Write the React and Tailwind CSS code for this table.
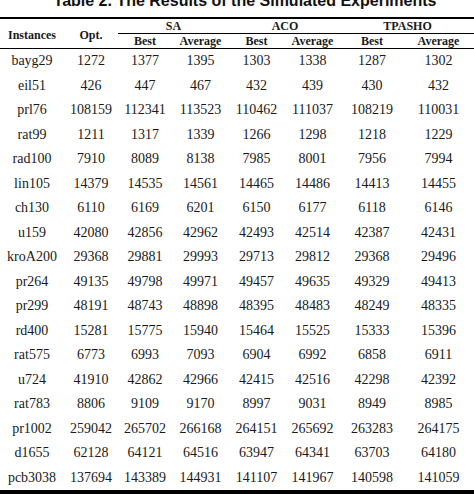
import React from "react";

const rows = [
  ["bayg29", "1272", "1377", "1395", "1303", "1338", "1287", "1302"],
  ["eil51", "426", "447", "467", "432", "439", "430", "432"],
  ["prl76", "108159", "112341", "113523", "110462", "111037", "108219", "110031"],
  ["rat99", "1211", "1317", "1339", "1266", "1298", "1218", "1229"],
  ["rad100", "7910", "8089", "8138", "7985", "8001", "7956", "7994"],
  ["lin105", "14379", "14535", "14561", "14465", "14486", "14413", "14455"],
  ["ch130", "6110", "6169", "6201", "6150", "6177", "6118", "6146"],
  ["u159", "42080", "42856", "42962", "42493", "42514", "42387", "42431"],
  ["kroA200", "29368", "29881", "29993", "29713", "29812", "29368", "29496"],
  ["pr264", "49135", "49798", "49971", "49457", "49635", "49329", "49413"],
  ["pr299", "48191", "48743", "48898", "48395", "48483", "48249", "48335"],
  ["rd400", "15281", "15775", "15940", "15464", "15525", "15333", "15396"],
  ["rat575", "6773", "6993", "7093", "6904", "6992", "6858", "6911"],
  ["u724", "41910", "42862", "42966", "42415", "42516", "42298", "42392"],
  ["rat783", "8806", "9109", "9170", "8997", "9031", "8949", "8985"],
  ["pr1002", "259042", "265702", "266168", "264151", "265692", "263283", "264175"],
  ["d1655", "62128", "64121", "64516", "63947", "64341", "63703", "64180"],
  ["pcb3038", "137694", "143389", "144931", "141107", "141967", "140598", "141059"],
];

const cols = "grid grid-cols-[64px_54px_54px_57px_55px_57px_62px_71px]";

export default function App() {
  return (
    <div className="w-[474px] h-[494px] overflow-hidden bg-white text-[#1a1a1a]">
      {/* title, cropped at the top */}
      <div className="h-[17px] overflow-hidden pl-4">
        <div className="-mt-[7px] text-center text-[16px] leading-none font-bold font-['Liberation_Sans',Arial,sans-serif] text-[#111]">
          Table 2. The Results of the Simulated Experiments
        </div>
      </div>
      <div className="h-[2px] bg-black" />

      {/* header */}
      <div
        className={`${cols} grid-rows-[15px_14px] border-b border-black font-['Liberation_Serif','Times_New_Roman',serif] font-bold text-[12px] leading-none`}
      >
        <div className="row-span-2 flex items-center justify-center pt-[2px]">Instances</div>
        <div className="row-span-2 flex items-center justify-center pt-[2px]">Opt.</div>
        <div className="col-span-2 flex items-center justify-center border-b border-black">SA</div>
        <div className="col-span-2 flex items-center justify-center border-b border-black">ACO</div>
        <div className="col-span-2 flex items-center justify-center border-b border-black">TPASHO</div>
        <div className="flex items-center justify-center">Best</div>
        <div className="flex items-center justify-center">Average</div>
        <div className="flex items-center justify-center">Best</div>
        <div className="flex items-center justify-center">Average</div>
        <div className="flex items-center justify-center">Best</div>
        <div className="flex items-center justify-center">Average</div>
      </div>

      {/* body */}
      <div className="font-['Liberation_Serif','Times_New_Roman',serif] text-[14px] leading-none">
        {rows.map((r) => (
          <div key={r[0]} className={`${cols} h-[24.5px]`}>
            {r.map((v, i) => (
              <div key={i} className="flex items-center justify-center">
                {v}
              </div>
            ))}
          </div>
        ))}
      </div>
      <div className="h-[4px] bg-black" />
    </div>
  );
}
